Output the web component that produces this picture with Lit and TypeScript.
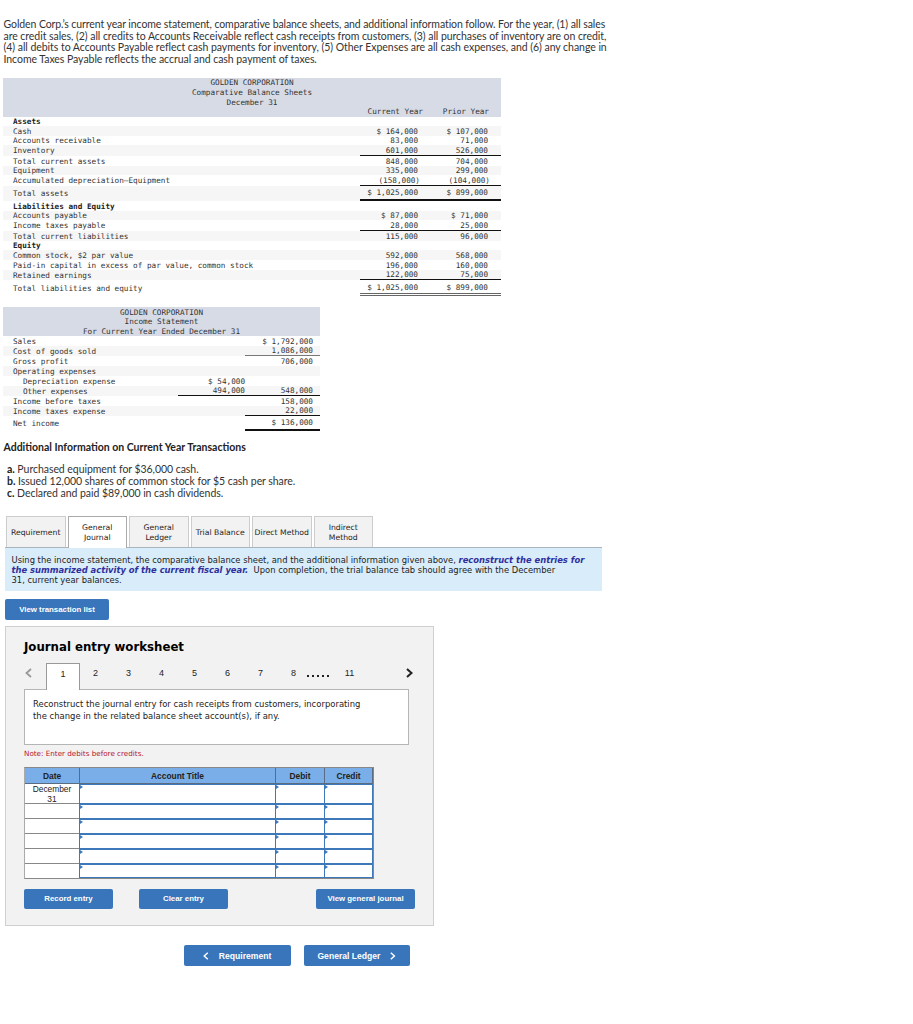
import { LitElement, html, css, nothing } from "lit";
import { customElement } from "lit/decorators.js";

type Row = { label: string; cells?: string[]; cls?: string; h: number };

const balance: Row[] = [
  { label: "Assets", cls: "b", h: 9 },
  { label: "Cash", cells: ["$ 164,000", "$ 107,000"], h: 10 },
  { label: "Accounts receivable", cells: ["83,000", "71,000"], h: 9 },
  { label: "Inventory", cells: ["601,000", "526,000"], cls: "rule", h: 11 },
  { label: "Total current assets", cells: ["848,000", "704,000"], h: 10 },
  { label: "Equipment", cells: ["335,000", "299,000"], h: 9 },
  { label: "Accumulated depreciation—Equipment", cells: ["(158,000)", "(104,000)"], cls: "rule neg", h: 11 },
  { label: "Total assets", cells: ["$ 1,025,000", "$ 899,000"], cls: "total", h: 15 },
  { label: "Liabilities and Equity", cls: "b", h: 10 },
  { label: "Accounts payable", cells: ["$ 87,000", "$ 71,000"], h: 9 },
  { label: "Income taxes payable", cells: ["28,000", "25,000"], cls: "rule", h: 11 },
  { label: "Total current liabilities", cells: ["115,000", "96,000"], h: 10 },
  { label: "Equity", cls: "b", h: 9 },
  { label: "Common stock, $2 par value", cells: ["592,000", "568,000"], h: 10 },
  { label: "Paid-in capital in excess of par value, common stock", cells: ["196,000", "160,000"], h: 10 },
  { label: "Retained earnings", cells: ["122,000", "75,000"], cls: "rule", h: 10 },
  { label: "Total liabilities and equity", cells: ["$ 1,025,000", "$ 899,000"], cls: "double", h: 16 },
];

const income: Row[] = [
  { label: "Sales", cells: ["", "$ 1,792,000"], h: 10 },
  { label: "Cost of goods sold", cells: ["", "1,086,000"], cls: "rule2 soft", h: 10 },
  { label: "Gross profit", cells: ["", "706,000"], h: 10 },
  { label: "Operating expenses", h: 10 },
  { label: "Depreciation expense", cells: ["$ 54,000", ""], cls: "ind", h: 10 },
  { label: "Other expenses", cells: ["494,000", "548,000"], cls: "ind rule", h: 10 },
  { label: "Income before taxes", cells: ["", "158,000"], h: 10 },
  { label: "Income taxes expense", cells: ["", "22,000"], cls: "rule2", h: 10 },
  { label: "Net income", cells: ["", "$ 136,000"], cls: "total2", h: 15 },
];

const tabs = ["Requirement", "General\nJournal", "General\nLedger", "Trial Balance", "Direct Method", "Indirect\nMethod"];

@customElement("app-root")
export class AppRoot extends LitElement {
  static styles = css`
    :host { display: block; width: 913px; height: 1024px; overflow: hidden; background: #fff; color: #222; box-sizing: border-box; padding-top: 19px; }
    * { box-sizing: border-box; }
    .l, .note div, span { white-space: pre; }
    .lato { font: 10.5px/11.7px Lato, sans-serif; color: #333; }
    .intro { margin-left: 3.5px; height: 59px; }
    .l { width: max-content; }
    .l1 { letter-spacing: -0.088px; }
    .l2 { letter-spacing: -0.051px; }
    .l3 { letter-spacing: -0.042px; }
    .l4 { letter-spacing: -0.05px; }
    .sheet { margin-left: 3px; font: 7.68px/10px "DejaVu Sans Mono", monospace; color: #333; }
    .bal { width: 498px; }
    .inc { width: 317px; margin-top: 11px; }
    .head { background: #d7dbe6; text-align: center; line-height: 9.75px; }
    .bal .head { height: 39px; }
    .inc .head { height: 29px; padding-top: 0.5px; }
    .cols { display: grid; grid-template-columns: 357px 63px 66px; text-align: right; }
    .row { display: grid; }
    .bal .row { grid-template-columns: 357px 74px 67px; }
    .inc .row { grid-template-columns: 175px 67px 75px; }
    .row:nth-child(odd) { background: #f6f6f6; }
    .row > span { height: 100%; display: flex; align-items: center; line-height: 9px; }
    .row > .c { justify-content: flex-end; }
    .row > span:first-child { padding-left: 10px; }
    .row.ind > span:first-child { padding-left: 20px; }
    .bal .c1 { padding-right: 16px; }
    .bal .c2 { padding-right: 13px; }
    .bal .neg .c1 { padding-right: 14px; }
    .bal .neg .c2 { padding-right: 11px; }
    .inc .c2 { padding-right: 7px; }
    .b { font-weight: 700; color: #222; }
    .rule > .c, .rule2 > .c2 { border-bottom: 1px solid #111; }
    .soft > .c2 { border-bottom-color: #777; }
    .total > .c, .total2 > .c2 { border-bottom: 2px solid #111; }
    .double > .c { border-bottom: 3px double #666; padding-top: 1px; }
    .addl { margin: 11px 0 0 3.5px; height: 74px; }
    .addl .h { font-weight: 700; color: #222; margin-bottom: 10.5px; }
    .addl .i { margin-left: 3.5px; letter-spacing: -0.05px; }
    .addl b { color: #222; }
    .tabs { display: flex; margin-left: 6px; height: 31px; gap: 2px; font: 7.7px/9.8px "DejaVu Sans", sans-serif; color: #222; }
    .tab { width: 59.5px; padding-top: 1px; background: #f2f2f2; border: 1px solid #ccc; border-bottom: 0; display: flex; align-items: center; justify-content: center; text-align: center; }
    .tab.on { background: #fff; height: 32px; position: relative; border-color: #aaa; padding-top: 0; }
    .note { margin-left: 5px; width: 597px; height: 44px; background: #d9ecfa; border-top: 1px solid #a9b4bc; padding: 6.5px 0 0 6.5px; font: 8.4px/10.2px "DejaVu Sans", sans-serif; color: #222; }
    .note b { font-style: italic; color: #30309c; }
    .btn { background: #3875ba; color: #fff; border-radius: 2px; font: 700 7.85px/20px "Liberation Sans", sans-serif; height: 21px; display: flex; align-items: center; justify-content: center; }
    .vt { margin: 8px 0 0 5px; width: 104px; }
    .panel { margin: 6px 0 0 5px; width: 429px; height: 300px; background: #f2f2f2; border: 1px solid #d0d0d0; padding: 12px 18px 0; }
    .title { font: 700 11.75px/16px "DejaVu Sans", sans-serif; color: #000; height: 24px; }
    .pager { display: flex; height: 27px; align-items: flex-start; position: relative; z-index: 1; font: 9px/21px "Liberation Sans", sans-serif; color: #222; }
    .pager > * { flex: none; }
    .pg { width: 33px; text-align: center; }
    .pg.on { height: 27px; width: 34px; margin-right: -1px; background: #fff; border: 1px solid #999; border-bottom: 0; line-height: 20px; }
    .arrow { width: 22px; height: 20px; padding: 5px 0 0 1px; line-height: 0; }
    .dots { width: 24px; display: flex; gap: 3px; padding-top: 12px; }
    .dots i { width: 2px; height: 2px; background: #222; }
    .dots { margin-left: -3px; }
    .p11 { margin-left: 2px; margin-right: 39px; }
    .box { width: 385px; height: 56px; margin-top: -1px; background: #fff; border: 1px solid #b5b5b5; padding: 9px 0 0 8px; font: 8.45px/11.7px "DejaVu Sans", sans-serif; color: #222; }
    .red { margin-top: 3px; height: 19px; font: 7.2px/11px "DejaVu Sans", sans-serif; color: #b5122b; }
    .grid { width: 350px; height: 112px; display: grid; grid-template-columns: 55px 196px 49px 48px; grid-template-rows: 16px 20px repeat(4, 15px) 14px; border: 1px solid #888; border-left-color: #aaa; font: 8.4px/9.7px "Liberation Sans", sans-serif; }
    .th { background: #79aee8; color: #222; font-weight: 700; text-align: center; line-height: 16px; border-right: 1px solid #5b6b80; border-bottom: 1px solid #5b6b80; }
    .td { background: #fff; text-align: center; white-space: pre; border-right: 1px solid #5b6b80; border-bottom: 1px solid #888; padding-top: 1px; margin-right: 0; }
    .td:nth-last-child(4) { border-bottom: 0; }
    .in { border: 1px solid #3d78bb; border-left: 0; display: flex; background: #fff; box-shadow: -1px 0 0 #3d78bb; }
    .in::before { content: ""; width: 0; height: 0; border-left: 3px solid #3d78bb; border-top: 2px solid transparent; border-bottom: 2px solid transparent; }
    .btns { display: flex; justify-content: space-between; width: 391px; margin-top: 10px; }
    .btns .btn { width: 89px; height: 20px; }
    .btns .wide { width: 99px; margin-left: 62px; }
    .nav { display: flex; margin: 19px 0 0 184px; gap: 13px; }
    .nav .btn { width: 106.5px; gap: 10px; font-size: 8.6px; }
  `;

  row(r: Row) {
    return html`<div class="row ${r.cls ?? ""}" style="height:${r.h}px"><span>${r.label}</span>${r.cells
      ? r.cells.map((c, i) => html`<span class="c c${i + 1}">${c}</span>`) : nothing}</div>`;
  }

  chev(right: boolean, s = 10, color = "#222", w = 2) {
    return html`<svg width=${s * 0.7} height=${s} viewBox="0 0 7 10" fill="none" stroke=${color} stroke-width=${w}><path d=${right ? "M1 1L5.5 5L1 9" : "M6 1L1.5 5L6 9"} /></svg>`;
  }

  render() {
    return html`
      <div class="intro lato">
        <div class="l l1">Golden Corp.’s current year income statement, comparative balance sheets, and additional information follow. For the year, (1) all sales</div>
        <div class="l l2">are credit sales, (2) all credits to Accounts Receivable reflect cash receipts from customers, (3) all purchases of inventory are on credit,</div>
        <div class="l l3">(4) all debits to Accounts Payable reflect cash payments for inventory, (5) Other Expenses are all cash expenses, and (6) any change in</div>
        <div class="l l4">Income Taxes Payable reflects the accrual and cash payment of taxes.</div>
      </div>
      <div class="sheet bal">
        <div class="head">
          <div>GOLDEN CORPORATION</div><div>Comparative Balance Sheets</div><div>December 31</div>
          <div class="cols"><span></span><span>Current Year</span><span>Prior Year</span></div>
        </div>
        ${balance.map((r) => this.row(r))}
      </div>
      <div class="sheet inc">
        <div class="head"><div>GOLDEN CORPORATION</div><div>Income Statement</div><div>For Current Year Ended December 31</div></div>
        ${income.map((r) => this.row(r))}
      </div>
      <div class="addl lato">
        <div class="l h">Additional Information on Current Year Transactions</div>
        <div class="l i"><b>a.</b> Purchased equipment for $36,000 cash.</div>
        <div class="l i"><b>b.</b> Issued 12,000 shares of common stock for $5 cash per share.</div>
        <div class="l i"><b>c.</b> Declared and paid $89,000 in cash dividends.</div>
      </div>
      <div class="tabs">${tabs.map((t, i) => html`<div class="tab ${i === 1 ? "on" : ""}"><span>${t}</span></div>`)}</div>
      <div class="note">
        <div>Using the income statement, the comparative balance sheet, and the additional information given above, <b>reconstruct the entries for</b></div>
        <div><b>the summarized activity of the current fiscal year.</b>  Upon completion, the trial balance tab should agree with the December</div>
        <div>31, current year balances.</div>
      </div>
      <div class="btn vt"><span>View transaction list</span></div>
      <div class="panel">
        <div class="title"><span>Journal entry worksheet</span></div>
        <div class="pager">
          <span class="arrow">${this.chev(false, 10, "#999", 1.8)}</span><span class="pg on">1</span>
          ${[2, 3, 4, 5, 6, 7, 8].map((n) => html`<span class="pg">${n}</span>`)}
          <span class="dots">${[1, 2, 3, 4, 5].map(() => html`<i></i>`)}</span>
          <span class="pg p11">11</span><span class="arrow">${this.chev(true, 10)}</span>
        </div>
        <div class="box"><span>Reconstruct the journal entry for cash receipts from customers, incorporating
the change in the related balance sheet account(s), if any.</span></div>
        <div class="red"><span>Note: Enter debits before credits.</span></div>
        <div class="grid">
          ${["Date", "Account Title", "Debit", "Credit"].map((t) => html`<div class="th">${t}</div>`)}
          ${["December\n31", "", "", "", "", ""].map((t) => html`<div class="td">${t}</div><div class="in"></div><div class="in"></div><div class="in"></div>`)}
        </div>
        <div class="btns">
          <div class="btn"><span>Record entry</span></div>
          <div class="btn"><span>Clear entry</span></div>
          <div class="btn wide"><span>View general journal</span></div>
        </div>
      </div>
      <div class="nav">
        <div class="btn">${this.chev(false, 8, "#fff", 1.8)}<span>Requirement</span></div>
        <div class="btn"><span>General Ledger</span>${this.chev(true, 8, "#fff", 1.8)}</div>
      </div>`;
  }
}
